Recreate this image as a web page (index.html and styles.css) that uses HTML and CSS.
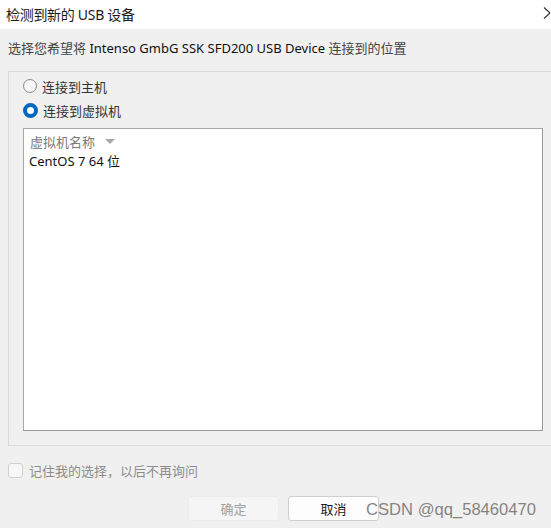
FILE: index.html
```html
<!DOCTYPE html>
<html lang="zh-CN">
<head>
<meta charset="utf-8">
<title>检测到新的 USB 设备</title>
<link rel="stylesheet" href="styles.css">
</head>
<body>
<div class="window">
  <div class="titlebar">
    <span class="title">检测到新的 USB 设备</span>
    <svg class="close" width="9" height="12" viewBox="0 0 9 12"><path d="M2 0.5 L8 6 M2 11.5 L8 6" stroke="#333" stroke-width="1.1" fill="none"/></svg>
  </div>
  <div class="body">
    <div class="prompt">选择您希望将 <span class="dev">Intenso GmbG SSK SFD200 USB Device</span> 连接到的位置</div>
    <div class="group">
      <label class="radio-row"><span class="radio"></span><span>连接到主机</span></label>
      <label class="radio-row"><span class="radio checked"></span><span>连接到虚拟机</span></label>
      <div class="list">
        <div class="list-head"><span>虚拟机名称</span><span class="sort"></span></div>
        <div class="list-item">CentOS 7 64 位</div>
      </div>
    </div>
    <div class="remember"><span class="checkbox"></span><span>记住我的选择，以后不再询问</span></div>
    <div class="buttons">
      <button class="btn disabled">确定</button>
      <button class="btn">取消</button>
    </div>
  </div>
  <div class="watermark">CSDN @qq_58460470</div>
</div>
</body>
</html>
```
FILE: styles.css
```css
html, body {
  margin: 0;
  padding: 0;
}
body {
  width: 551px;
  height: 528px;
  overflow: hidden;
  background: #f0f0f0;
  font-family: "Noto Sans", "Noto Sans CJK SC", sans-serif;
  font-size: 13px;
  color: #1a1a1a;
}
.window {
  position: relative;
  width: 551px;
  height: 528px;
  overflow: hidden;
}
.titlebar {
  height: 29px;
  background: #ffffff;
  display: flex;
  align-items: center;
  justify-content: space-between;
  padding-left: 6px;
  box-sizing: border-box;
}
.title {
  font-size: 14px;
  letter-spacing: -0.3px;
  color: #1a1a1a;
  margin-top: -2px;
}
.close {
  margin-top: -4px;
  flex: none;
}
.body {
  padding-left: 8px;
}
.prompt {
  padding-top: 10px;
  line-height: 18px;
  height: 18px;
  margin-bottom: 14px;
  color: #444;
  white-space: nowrap;
}
.dev {
  color: #111;
}
.group {
  border-top: 1px solid #dadada;
  border-left: 1px solid #dadada;
  border-bottom: 1px solid #dadada;
  margin-right: -20px;
  padding: 2px 0 14px 14px;
}
.radio-row {
  display: flex;
  align-items: center;
  height: 24px;
  gap: 5px;
  color: #333;
}
.radio {
  width: 12px;
  height: 12px;
  border-radius: 50%;
  border: 1.5px solid #8a8a8a;
  background: #f6f6f6;
  flex: none;
}
.radio.checked {
  border: 4px solid #0067c0;
  width: 7px;
  height: 7px;
  background: #ffffff;
}
.list {
  margin-top: 6px;
  width: 518px;
  height: 301px;
  background: #ffffff;
  border: 1px solid #a8a8a8;
  border-bottom-color: #999;
  border-right-color: #999;
  box-sizing: content-box;
}
.list-head {
  display: flex;
  align-items: center;
  height: 22px;
  padding-left: 6px;
  color: #7a7a7a;
  gap: 10px;
  margin-top: 1px;
}
.sort {
  width: 0;
  height: 0;
  border-left: 5px solid transparent;
  border-right: 5px solid transparent;
  border-top: 5px solid #a8a8a8;
}
.list-item {
  height: 18px;
  line-height: 18px;
  padding-left: 5px;
  color: #111;
}
.remember {
  display: flex;
  align-items: center;
  gap: 6px;
  height: 20px;
  margin-top: 14px;
  color: #8c8c8c;
}
.checkbox {
  width: 13px;
  height: 13px;
  border: 1px solid #cfcfcf;
  border-radius: 3px;
  background: #f7f7f7;
  flex: none;
}
.buttons {
  display: flex;
  gap: 9px;
  margin-top: 16px;
  padding-left: 180px;
}
.btn {
  width: 91px;
  height: 25px;
  font-family: "Noto Sans", "Noto Sans CJK SC", sans-serif;
  font-size: 13px;
  color: #1a1a1a;
  background: #fdfdfd;
  border: 1px solid #cfcfcf;
  border-radius: 3px;
  padding: 0;
}
.btn.disabled {
  background: #f5f5f5;
  border-color: #ececec;
  color: #a0a0a0;
}
.watermark {
  position: absolute;
  left: 366px;
  top: 499px;
  font-family: "Liberation Sans", Arial, sans-serif;
  font-size: 16.6px;
  color: rgba(110, 110, 110, 0.85);
  white-space: nowrap;
  line-height: 22px;
}
```
